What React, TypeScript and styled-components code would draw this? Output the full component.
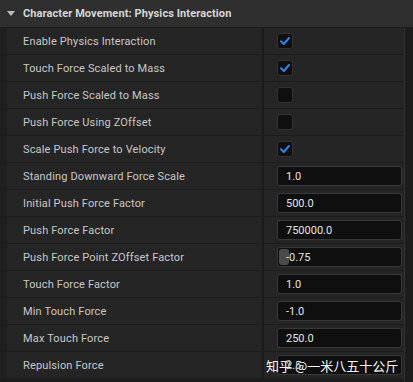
import React from 'react';
import styled, {createGlobalStyle} from 'styled-components';

type Prop =
  | {label: string; kind: 'bool'; checked: boolean}
  | {label: string; kind: 'num'; value: string; slider?: boolean};

const props: Prop[] = [
  {label: 'Enable Physics Interaction', kind: 'bool', checked: true},
  {label: 'Touch Force Scaled to Mass', kind: 'bool', checked: true},
  {label: 'Push Force Scaled to Mass', kind: 'bool', checked: false},
  {label: 'Push Force Using ZOffset', kind: 'bool', checked: false},
  {label: 'Scale Push Force to Velocity', kind: 'bool', checked: true},
  {label: 'Standing Downward Force Scale', kind: 'num', value: '1.0'},
  {label: 'Initial Push Force Factor', kind: 'num', value: '500.0'},
  {label: 'Push Force Factor', kind: 'num', value: '750000.0'},
  {label: 'Push Force Point ZOffset Factor', kind: 'num', value: '-0.75', slider: true},
  {label: 'Touch Force Factor', kind: 'num', value: '1.0'},
  {label: 'Min Touch Force', kind: 'num', value: '-1.0'},
  {label: 'Max Touch Force', kind: 'num', value: '250.0'},
  {label: 'Repulsion Force', kind: 'num', value: '2.5'},
];

const GlobalStyle = createGlobalStyle`
  html, body {
    margin: 0;
    padding: 0;
    background: #1c1c1c;
    font-family: Roboto, "Noto Sans", "Liberation Sans", sans-serif;
  }
`;

const Panel = styled.div`
  position: relative;
  width: 413px;
  height: 382px;
  overflow: hidden;
  background: #1c1c1c;
`;

const Header = styled.div`
  display: flex;
  align-items: center;
  gap: 8px;
  height: 28px;
  padding-left: 7px;
  background: #2f2f2f;
  border-bottom: 1px solid #1c1c1c;
  box-sizing: border-box;
  color: #d6d6d6;
  font-size: 11px;
  font-weight: 700;
  letter-spacing: 0.1px;
`;

const Arrow = styled.span`
  width: 0;
  height: 0;
  border-left: 4px solid transparent;
  border-right: 4px solid transparent;
  border-top: 5px solid #bdbdbd;
`;

const Row = styled.div`
  display: flex;
  height: 27px;
  box-sizing: border-box;
  border-bottom: 1px solid #1c1c1c;
  margin-right: 8px;
`;

const Indent = styled.div`
  width: 7px;
  background: #1f1f1f;
`;

const NameCell = styled.div`
  flex: 0 0 257px;
  display: flex;
  align-items: center;
  padding-left: 16px;
  box-sizing: border-box;
  background: #252525;
  color: #c8c8c8;
  font-size: 11px;
  letter-spacing: 0.15px;
  border-right: 2px solid #1c1c1c;
`;

const ValueCell = styled.div`
  flex: 1;
  display: flex;
  align-items: center;
  padding-left: 13px;
  padding-right: 3px;
  background: #252525;
`;

const Box = styled.div`
  width: 16px;
  height: 16px;
  box-sizing: border-box;
  border-radius: 3px;
  background: #0f0f0f;
  border: 1px solid #333;
  display: flex;
  align-items: center;
  justify-content: center;
`;

const Input = styled.div`
  position: relative;
  flex: 1;
  height: 20px;
  box-sizing: border-box;
  border-radius: 3px;
  background: #0f0f0f;
  border: 1px solid #383838;
  display: flex;
  align-items: center;
  padding-left: 8px;
  color: #e4e4e4;
  font-size: 11px;
  overflow: hidden;
`;

const SliderFill = styled.div`
  position: absolute;
  left: 1px;
  top: 1px;
  bottom: 1px;
  width: 10px;
  border-radius: 3px;
  background: #4a4a4a;
`;

const InputText = styled.span`
  position: relative;
`;

const Edge = styled.div`
  position: absolute;
  top: 28px;
  right: 0;
  bottom: 0;
  width: 8px;
  background: #1c1c1c;
  border-left: 1px solid #333;
`;

const Watermark = styled.div`
  position: absolute;
  left: 266px;
  top: 356px;
  color: #ffffff;
  font-size: 13px;
  font-family: "Noto Sans CJK SC", sans-serif;
  text-shadow: 0 0 1px #000;
  white-space: nowrap;
`;

const Check = () => (
  <svg width="12" height="12" viewBox="0 0 12 12">
    <path
      d="M2 6.3 L4.8 9 L10 3"
      fill="none"
      stroke="#2f83ea"
      strokeWidth="2"
      strokeLinecap="round"
      strokeLinejoin="round"
    />
  </svg>
);

const PropRow: React.FC<{p: Prop}> = ({p}) => (
  <Row>
    <Indent />
    <NameCell>{p.label}</NameCell>
    <ValueCell>
      {p.kind === 'bool' ? (
        <Box>{p.checked && <Check />}</Box>
      ) : (
        <Input>
          {p.slider && <SliderFill />}
          <InputText>{p.value}</InputText>
        </Input>
      )}
    </ValueCell>
  </Row>
);

const App: React.FC = () => (
  <>
    <GlobalStyle />
    <Panel>
      <Header>
        <Arrow />
        Character Movement: Physics Interaction
      </Header>
      {props.map(p => (
        <PropRow key={p.label} p={p} />
      ))}
      <Edge />
      <Watermark>知乎 @一米八五十公斤</Watermark>
    </Panel>
  </>
);

export default App;
